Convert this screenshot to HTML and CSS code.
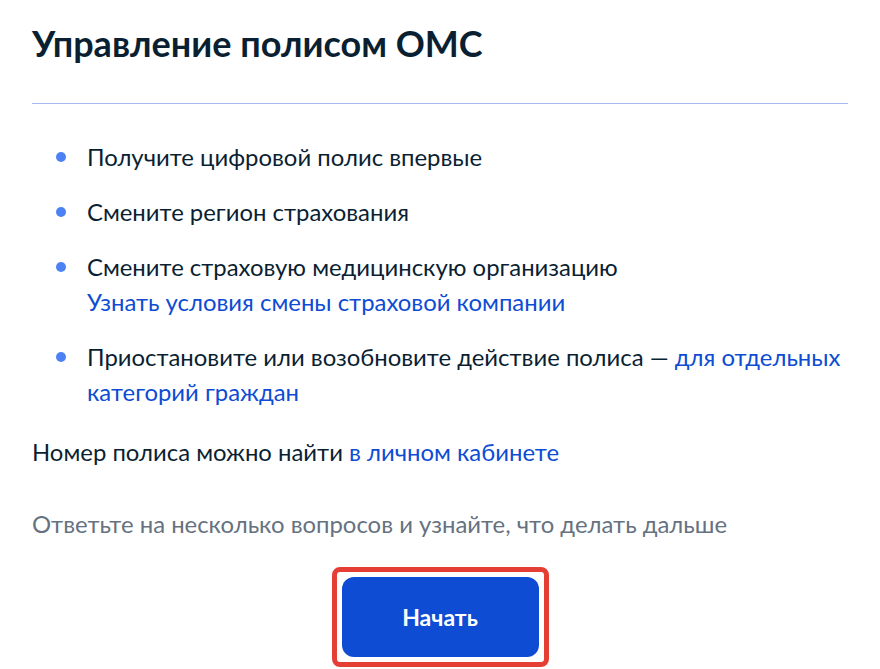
FILE: index.html
```html
<!DOCTYPE html>
<html lang="ru">
<head>
<meta charset="utf-8">
<title>Управление полисом ОМС</title>
<link rel="stylesheet" href="styles.css">
</head>
<body>
<main class="page">
  <h1 class="title">Управление полисом ОМС</h1>
  <hr class="divider">
  <ul class="list">
    <li class="item"><span class="dot"></span><div class="item-text">Получите цифровой полис впервые</div></li>
    <li class="item"><span class="dot"></span><div class="item-text">Смените регион страхования</div></li>
    <li class="item"><span class="dot"></span><div class="item-text">Смените страховую медицинскую организацию<br><a class="link" href="#">Узнать условия смены страховой компании</a></div></li>
    <li class="item"><span class="dot"></span><div class="item-text">Приостановите или возобновите действие полиса — <a class="link" href="#">для отдельных категорий граждан</a></div></li>
  </ul>
  <p class="note">Номер полиса можно найти <a class="link" href="#">в личном кабинете</a></p>
  <p class="hint">Ответьте на несколько вопросов и узнайте, что делать дальше</p>
  <div class="actions">
    <div class="focus-frame">
      <button class="btn" type="button">Начать</button>
    </div>
  </div>
</main>
</body>
</html>
```
FILE: styles.css
```css
html, body {
  margin: 0;
  padding: 0;
  background: #ffffff;
}
body {
  font-family: Lato, "Noto Sans", sans-serif;
  color: #0b1f33;
}
.page {
  width: 816px;
  padding: 0 32px;
}
.title {
  margin: 0;
  padding-top: 21px;
  font-size: 36px;
  line-height: 44px;
  font-weight: 700;
  color: #0b1f33;
}
.divider {
  margin: 38px 0 0 0;
  border: 0;
  height: 1px;
  background: #a9bbee;
}
.list {
  list-style: none;
  margin: 35px 0 0 0;
  padding: 0;
  display: flex;
  flex-direction: column;
  gap: 20px;
}
.item {
  display: flex;
  align-items: flex-start;
}
.dot {
  flex: none;
  width: 10px;
  height: 10px;
  border-radius: 50%;
  background: #4d82f5;
  margin: 13px 0 0 24px;
}
.item-text {
  margin-left: 21px;
  font-size: 23.9px;
  line-height: 35px;
}
.link {
  color: #0d4cd3;
  text-decoration: none;
}
.note {
  margin: 25px 0 0 0;
  font-size: 23.9px;
  line-height: 35px;
}
.hint {
  margin: 37px 0 0 0;
  font-size: 23.9px;
  line-height: 35px;
  color: #66727f;
}
.actions {
  display: flex;
  justify-content: center;
  margin-top: 26px;
}
.focus-frame {
  border: 5px solid #e53e35;
  border-radius: 8px;
  padding: 5px;
}
.btn {
  display: block;
  width: 197px;
  height: 80px;
  border: 0;
  border-radius: 12px;
  background: #0d4cd3;
  color: #ffffff;
  font-family: Lato, "Noto Sans", sans-serif;
  font-size: 23px;
  font-weight: 700;
  cursor: pointer;
}
```
